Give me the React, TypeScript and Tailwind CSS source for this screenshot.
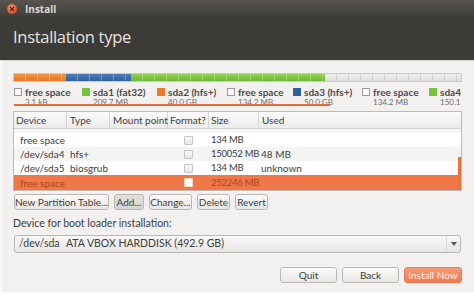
import React from "react";

function Legend({
  swatch,
  label,
  size,
  w,
}: {
  swatch: string;
  label: string;
  size: string;
  w: string;
}) {
  return (
    <div className={`flex flex-col shrink-0 ${w}`}>
      <div className="flex items-center h-[11px]">
        <div className={`w-[8px] h-[8px] shrink-0 ${swatch}`} />
        <span className="ml-[3px] text-[10px] font-bold text-[#4a4a4a] leading-none whitespace-nowrap">
          {label}
        </span>
      </div>
      <span className="pl-[11px] text-[8px] text-[#6d6d6d] leading-none mt-[1px] whitespace-nowrap">
        {size}
      </span>
    </div>
  );
}

function Check({ white }: { white?: boolean }) {
  return (
    <div
      className={
        white
          ? "w-[9px] h-[9px] rounded-[1px] bg-white border border-[#f6d9cb]"
          : "w-[9px] h-[9px] rounded-[1px] border border-[#c4c4c4] bg-gradient-to-b from-[#f7f7f7] to-[#e6e6e6]"
      }
    />
  );
}

function Row({
  dev,
  type,
  size,
  used,
  bg,
  sel,
  h = "h-[14px]",
}: {
  dev: string;
  type: string;
  size: string;
  used: string;
  bg: string;
  sel?: boolean;
  h?: string;
}) {
  const txt = sel ? "text-[#a8481c]" : "text-[#3d3d3d]";
  return (
    <div className={`flex items-center ${h} ${bg} ${txt} text-[10px] leading-none`}>
      <div className="w-[53px] pl-[6px] whitespace-nowrap">{dev}</div>
      <div className="w-[43px] pl-[3px] whitespace-nowrap">{type}</div>
      <div className="w-[58px]" />
      <div className="w-[41px] flex justify-center">
        <Check white={sel} />
      </div>
      <div className="w-[50px] pl-[2px] whitespace-nowrap text-[9.5px] tracking-[-0.25px]">{size}</div>
      <div className="flex-1 pl-[2px] whitespace-nowrap">{used}</div>
    </div>
  );
}

function Btn({
  children,
  w,
  pressed,
}: {
  children: React.ReactNode;
  w: string;
  pressed?: boolean;
}) {
  return (
    <div
      className={`${w} h-[16px] flex items-center justify-center rounded-[3px] border border-[#b9b7b3] text-[10px] text-[#3d3d3d] leading-none whitespace-nowrap ${
        pressed
          ? "bg-gradient-to-b from-[#e2e0dd] to-[#d6d4d0]"
          : "bg-gradient-to-b from-[#fbfbfa] to-[#e9e7e4]"
      }`}
    >
      {children}
    </div>
  );
}

export default function App() {
  return (
    <div className="w-[474px] h-[295px] overflow-hidden bg-[#f2f1f0] flex flex-col font-['Lato',sans-serif]">
      {/* title bar */}
      <div className="h-[17px] bg-gradient-to-b from-[#57544f] to-[#403e3a] flex items-center pl-[7px]">
        <div className="w-[10px] h-[10px] rounded-full bg-[radial-gradient(circle_at_40%_35%,#f9906a,#e2532a_70%,#b63d1e)] flex items-center justify-center">
          <svg width="6" height="6" viewBox="0 0 6 6">
            <path d="M1 1L5 5M5 1L1 5" stroke="#5a2314" strokeWidth="1.2" />
          </svg>
        </div>
        <span className="ml-[8px] text-[10px] font-bold text-[#dcd9d2] leading-none font-['Open_Sans',sans-serif]">
          Install
        </span>
      </div>
      {/* header */}
      <div className="h-[43px] bg-[#3d3b37] flex items-center pl-[13px] pb-[2px]">
        <span className="text-[16.5px] text-[#e6e4df] leading-none tracking-[-0.3px] font-['Open_Sans',sans-serif]">
          Installation type
        </span>
      </div>
      <div className="h-[1px] bg-[#d9d6d1]" />
      {/* body */}
      <div className="flex-1 flex flex-col px-[11px] border-l-[2px] border-[#fafaf9]">
        {/* partition bar */}
        <div className="mt-[12px] h-[9px] w-[449px] flex border border-[#c9c9c9]">
          <div className="w-[52px] bg-[repeating-linear-gradient(90deg,transparent_0_11px,rgba(255,255,255,0.28)_11px_12px),linear-gradient(#f0963f,#e2752a)]" />
          <div className="w-[65px] bg-[repeating-linear-gradient(90deg,transparent_0_11px,rgba(255,255,255,0.28)_11px_12px),linear-gradient(#4b7bb8,#30619f)]" />
          <div className="w-[194px] bg-[repeating-linear-gradient(90deg,transparent_0_11px,rgba(255,255,255,0.28)_11px_12px),linear-gradient(#8fd24f,#6db834)]" />
          <div className="flex-1 bg-[repeating-linear-gradient(90deg,transparent_0_11px,rgba(0,0,0,0.1)_11px_12px),linear-gradient(#f0f0f0,#dedede)]" />
        </div>
        {/* legend */}
        <div className="mt-[4px] w-[449px] overflow-hidden flex pl-[1px]">
          <Legend w="w-[68px]" swatch="bg-white border border-[#9a9a9a]" label="free space" size="3.1 kB" />
          <Legend w="w-[75px]" swatch="bg-[#76c23a]" label="sda1 (fat32)" size="209.7 MB" />
          <Legend w="w-[70px]" swatch="bg-[#ea7a26]" label="sda2 (hfs+)" size="40.0 GB" />
          <Legend w="w-[66px]" swatch="bg-white border border-[#9a9a9a]" label="free space" size="134.2 MB" />
          <Legend w="w-[69px]" swatch="bg-[#30619f]" label="sda3 (hfs+)" size="50.0 GB" />
          <Legend w="w-[67px]" swatch="bg-white border border-[#9a9a9a]" label="free space" size="134.2 MB" />
          <Legend w="w-[40px]" swatch="bg-[#76c23a]" label="sda4" size="150.1" />
        </div>
        <div className="mt-[-2px] ml-[1px] w-[316px] h-[2px] bg-[#e56a3a]" />
        {/* table */}
        <div className="mt-[5px] w-[449px] h-[80px] border border-[#bdbbb7] bg-white flex flex-col relative overflow-hidden">
          <div className="h-[17px] shrink-0 flex bg-gradient-to-b from-[#fbfbfb] to-[#ecebea] border-b border-[#d3d1cd] text-[10px] text-[#3d3d3d] leading-none">
            <div className="w-[53px] pl-[2px] flex items-center border-r border-[#d6d4d0]">Device</div>
            <div className="w-[43px] pl-[3px] flex items-center border-r border-[#d6d4d0]">Type</div>
            <div className="w-[58px] pl-[3px] flex items-center border-r border-[#d6d4d0] whitespace-nowrap">Mount point</div>
            <div className="w-[41px] pl-[2px] flex items-center border-r border-[#d6d4d0]">Format?</div>
            <div className="w-[50px] pl-[2px] flex items-center border-r border-[#d6d4d0]">Size</div>
            <div className="flex-1 pl-[3px] flex items-center">Used</div>
          </div>
          <div className="flex-1 flex flex-col overflow-hidden">
            <div className="h-[4px] shrink-0 bg-[#f6f6f6]" />
            <Row dev="free space" type="" size="134 MB" used="" bg="bg-white" />
            <Row dev="/dev/sda4" type="hfs+" size="150052 MB" used="48 MB" bg="bg-[#f4f4f3]" />
            <Row dev="/dev/sda5" type="biosgrub" size="134 MB" used="unknown" bg="bg-white" />
            <Row dev="free space" type="" size="252246 MB" used="" bg="bg-[#f07748]" sel h="h-[15px]" />
          </div>
          <div className="absolute right-0 top-[45px] w-[3px] h-[33px] bg-[#e9743f]" />
        </div>
        {/* buttons */}
        <div className="mt-[3px] ml-[1px] flex gap-[5px]">
          <Btn w="w-[95px]">New Partition Table...</Btn>
          <Btn w="w-[30px]" pressed>Add...</Btn>
          <Btn w="w-[43px]">Change...</Btn>
          <Btn w="w-[33px]">Delete</Btn>
          <Btn w="w-[33px]">Revert</Btn>
        </div>
        <div className="mt-[8px] text-[10.5px] text-[#3d3d3d] leading-none">
          Device for boot loader installation:
        </div>
        <div className="mt-[6px] ml-[1px] w-[447px] h-[18px] rounded-[3px] border border-[#bab8b4] bg-gradient-to-b from-[#f9f9f8] to-[#e6e5e2] flex items-center text-[10.5px] text-[#3d3d3d] leading-none">
          <span className="pl-[4px] w-[51px]">/dev/sda</span>
          <span className="whitespace-nowrap">ATA VBOX HARDDISK (492.9 GB)</span>
          <div className="ml-auto h-full w-[14px] border-l border-[#dcdad6] flex items-center justify-center">
            <svg width="6" height="4" viewBox="0 0 6 4">
              <path d="M0 0H6L3 4Z" fill="#555" />
            </svg>
          </div>
        </div>
        {/* bottom buttons */}
        <div className="mt-[14px] flex justify-end gap-[5px] pr-[1px]">
          <Btn w="w-[57px]">Quit</Btn>
          <Btn w="w-[57px]">Back</Btn>
          <div className="w-[58px] h-[16px] flex items-center justify-center rounded-[3px] border border-[#e77a55] bg-gradient-to-b from-[#f79a76] to-[#f07a4c] text-[10px] text-[#fff1ea] leading-none whitespace-nowrap">
            Install Now
          </div>
        </div>
      </div>
      <div className="h-[3px] bg-[#fbfbfa]" />
    </div>
  );
}
